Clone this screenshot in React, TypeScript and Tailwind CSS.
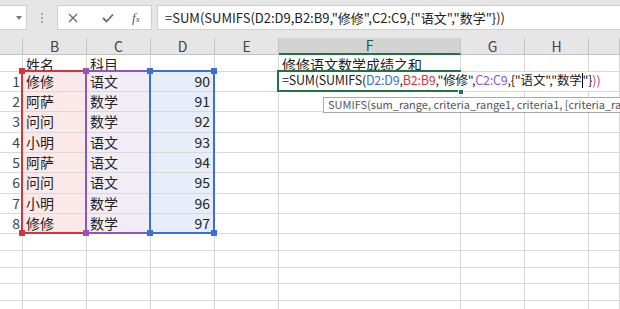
import React from 'react';

type Row = [string, string, number];

const data: Row[] = [
  ['修修', '语文', 90],
  ['阿萨', '数学', 91],
  ['问问', '数学', 92],
  ['小明', '语文', 93],
  ['阿萨', '语文', 94],
  ['问问', '语文', 95],
  ['小明', '数学', 96],
  ['修修', '数学', 97],
];

const letters = ['B', 'C', 'D', 'E', 'F', 'G', 'H', ''];

const formula = '=SUM(SUMIFS(D2:D9,B2:B9,"修修",C2:C9,{"语文","数学"}))';

const cols = 'grid grid-cols-[23px_64px_64px_64px_64px_182px_64px_64px_1fr] grid-rows-[17px_16.67px_repeat(8,20.33px)_repeat(6,16.67px)]';

const cell = 'border-r border-b border-[#d9d9d9] flex items-center overflow-hidden whitespace-nowrap leading-[15px]';
const title = 'border-r border-b border-[#d9d9d9] flex items-end whitespace-nowrap leading-[14px] pl-[3px]';

// colored range outline drawn over a block of cells
const Range = ({ pos, line, dot }: { pos: string; line: string; dot: string }) => (
  <div className={`${pos} relative`}>
    <div className={`absolute -left-[2px] -top-[2px] right-0 bottom-0 border-2 ${line}`} />
    <span className={`absolute -left-[4px] -top-[4px] size-[6px] ${dot}`} />
    <span className={`absolute -right-[2px] -top-[4px] size-[6px] ${dot}`} />
    <span className={`absolute -left-[4px] -bottom-[2px] size-[6px] ${dot}`} />
    <span className={`absolute -right-[2px] -bottom-[2px] size-[6px] ${dot}`} />
  </div>
);

const Toolbar = () => (
  <div className="h-[38px] bg-[#e6e6e6] flex items-start pt-[5px]">
    <div className="w-[27px] h-[25px] bg-white border-y border-r border-[#cfcfcf] flex items-center justify-end pr-[4px]">
      <span className="w-0 h-0 border-x-[3.5px] border-x-transparent border-t-[4px] border-t-[#777]" />
    </div>
    <div className="w-[30px] h-[25px] flex flex-col items-center justify-center gap-[2px]">
      <span className="size-[2px] bg-[#a8a8a8]" />
      <span className="size-[2px] bg-[#a8a8a8]" />
      <span className="size-[2px] bg-[#a8a8a8]" />
    </div>
    <div className="w-[95px] h-[25px] bg-white border border-[#cfcfcf] flex items-center">
      <svg width="10" height="10" viewBox="0 0 10 10" className="ml-[10px]">
        <path d="M1 1 L9 9 M9 1 L1 9" stroke="#6a6a6a" strokeWidth="1.3" fill="none" />
      </svg>
      <svg width="12" height="10" viewBox="0 0 12 10" className="ml-[24px]">
        <path d="M1 5 L4.5 8.5 L11 1.5" stroke="#6a6a6a" strokeWidth="1.8" fill="none" />
      </svg>
      <span className="ml-[18px] font-['Liberation_Serif',serif] italic text-[13px] text-[#555] leading-none">
        f<span className="text-[9px]">x</span>
      </span>
    </div>
    <div className="ml-[5px] flex-1 h-[25px] bg-white border-y border-l border-[#cfcfcf] flex items-center pl-[7px] text-[13px] text-[#222] whitespace-nowrap overflow-hidden">
      {formula}
    </div>
  </div>
);

const Cells = () => (
  <div className={`${cols} col-start-1 row-start-1`}>
    {/* column headers */}
    <div className="bg-[#e6e6e6] border-r border-b border-[#c4c4c4]" />
    {letters.map((l) =>
      l === 'F' ? (
        <div key={l} className="bg-[#d3d3d3] border-r border-b-2 border-r-[#c4c4c4] border-b-[#217346] flex items-center justify-center leading-[15px] text-[#1e5e38]">
          {l}
        </div>
      ) : (
        <div key={l || 'i'} className="bg-[#e6e6e6] border-r border-b border-[#c4c4c4] flex items-center justify-center leading-[15px] text-[#444]">
          {l}
        </div>
      ),
    )}

    {/* title row */}
    <div className={cell} />
    <div className={title}>姓名</div>
    <div className={title}>科目</div>
    <div className={cell} />
    <div className={cell} />
    <div className={title}>修修语文数学成绩之和</div>
    <div className={cell} />
    <div className={cell} />
    <div className={cell} />

    {data.map(([name, subj, score], i) => (
      <React.Fragment key={i}>
        <div className={`${cell} justify-end pr-[2px] text-[#444]`}>{i + 1}</div>
        <div className={`${cell} bg-[#fbe9e9] pl-[3px]`}>{name}</div>
        <div className={`${cell} bg-[#f1ecf6] pl-[3px]`}>{subj}</div>
        <div className={`${cell} bg-[#e8eef9] justify-end pr-[4px]`}>{score}</div>
        <div className={cell} />
        <div className={cell} />
        <div className={cell} />
        <div className={cell} />
        <div className={cell} />
      </React.Fragment>
    ))}

    {Array.from({ length: 6 }).map((_, r) =>
      Array.from({ length: 9 }).map((__, c) => <div key={`e${r}-${c}`} className={cell} />),
    )}
  </div>
);

const Overlay = () => (
  <div className={`${cols} col-start-1 row-start-1 pointer-events-none`}>
    <Range pos="col-start-2 row-start-3 row-span-8" line="border-[#d3353e]" dot="bg-[#d3353e]" />
    <Range pos="col-start-3 row-start-3 row-span-8" line="border-[#8b55c3]" dot="bg-[#8b55c3]" />
    <Range pos="col-start-4 row-start-3 row-span-8" line="border-[#3b70d1]" dot="bg-[#3b70d1]" />

    {/* active cell being edited */}
    <div className="col-start-6 row-start-3 relative">
      <div className="absolute -left-[2px] -top-[2px] right-0 bottom-0 border-2 border-[#217346]" />
      <div className="absolute left-0 top-0 bottom-[2px] bg-white flex items-center pl-[3px] pr-[4px] whitespace-nowrap text-[12.5px] tracking-[-0.2px] text-[#222]">
        =SUM(SUMIFS(
        <span className="text-[#3b70d1]">D2:D9</span>,
        <span className="text-[#d3353e]">B2:B9</span>,"修修",
        <span className="text-[#8b55c3]">C2:C9</span>
        {',{"语文","数学'}
        <span className="inline-block w-px h-[15px] bg-black" />
        {'"}'}
        <span className="text-[#9b45b0]">)</span>
        <span className="text-[#c3366c]">)</span>
      </div>
      <span className="absolute -right-[3px] -bottom-[3px] size-[6px] bg-[#217346] border border-white" />
      <div className="absolute left-[44px] top-[25px] h-[16px] w-[320px] bg-white border border-[#a9a9a9] flex items-center pl-[4px] text-[11px] text-[#555] whitespace-nowrap overflow-hidden">
        SUMIFS(sum_range, criteria_range1, criteria1, [criteria_range2, criteria2], ...)
      </div>
    </div>
  </div>
);

export default function App() {
  return (
    <div className="w-[620px] h-[309px] overflow-hidden bg-white font-['Noto_Sans_CJK_SC',sans-serif]">
      <Toolbar />
      <div className="grid text-[14px] text-[#222]">
        <Cells />
        <Overlay />
      </div>
    </div>
  );
}
